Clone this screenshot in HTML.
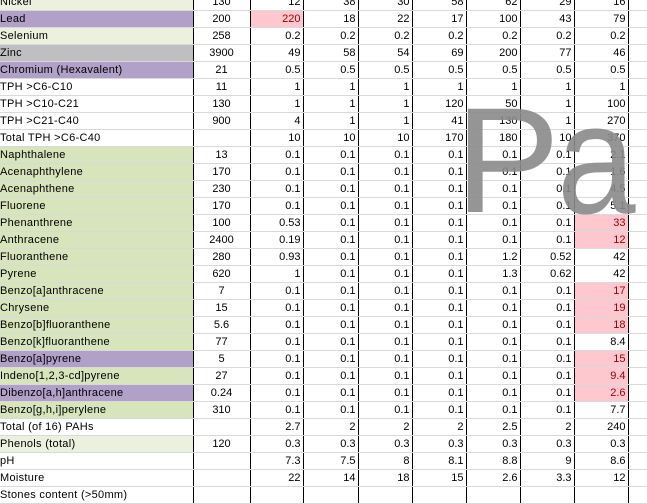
<!DOCTYPE html>
<html><head><style>
body{margin:0;width:647px;height:497px;overflow:hidden;background:#fff;position:relative;font-family:"Liberation Sans",sans-serif;font-size:11px;}
table{position:absolute;left:0;top:-6px;border-collapse:collapse;table-layout:fixed;width:700px;}
td{height:16px;padding:0 2px;border-bottom:1px solid #d9d9d9;white-space:nowrap;overflow:hidden;text-align:right;line-height:16px;color:#000;}
td.l{text-align:left;padding-left:0;letter-spacing:0.3px}
td.c{text-align:center}
td.b{border-left:1px solid #000}
.g1{background:#ebf1de}.pu{background:#b1a0c7}.gr{background:#bfbfbf}.g2{background:#d8e4bc}
.pk{background:#ffc7ce;color:#9c0006}
svg{position:absolute;left:0;top:0;pointer-events:none}
</style></head><body>
<table>
<colgroup><col style="width:193px"><col style="width:57px"><col style="width:53px"><col style="width:55px"><col style="width:54px"><col style="width:54px"><col style="width:54px"><col style="width:54px"><col style="width:54px"><col style="width:72px"></colgroup>
<tbody id="t"></tbody>
</table>
<svg width="647" height="497">
<g fill="#8a8a8a" fill-opacity="0.9" font-family="Liberation Sans, sans-serif">
<text transform="translate(455,212) scale(1.05,1)" font-size="150">P</text>
<text transform="translate(557,213) scale(0.9,1)" font-size="157">a</text>
</g>
</svg>
<script>
var R=[
["Nickel","g1","130","12","38","30","58","62","29","16"],
["Lead","pu","200","!220","18","22","17","100","43","79"],
["Selenium","g1","258","0.2","0.2","0.2","0.2","0.2","0.2","0.2"],
["Zinc","gr","3900","49","58","54","69","200","77","46"],
["Chromium (Hexavalent)","pu","21","0.5","0.5","0.5","0.5","0.5","0.5","0.5"],
["TPH >C6-C10","","11","1","1","1","1","1","1","1"],
["TPH >C10-C21","","130","1","1","1","120","50","1","100"],
["TPH >C21-C40","","900","4","1","1","41","130","1","270"],
["Total TPH >C6-C40","","","10","10","10","170","180","10","370"],
["Naphthalene","g2","13","0.1","0.1","0.1","0.1","0.1","0.1","2.1"],
["Acenaphthylene","g2","170","0.1","0.1","0.1","0.1","0.1","0.1","1.6"],
["Acenaphthene","g2","230","0.1","0.1","0.1","0.1","0.1","0.1","4.5"],
["Fluorene","g2","170","0.1","0.1","0.1","0.1","0.1","0.1","5.1"],
["Phenanthrene","g2","100","0.53","0.1","0.1","0.1","0.1","0.1","!33"],
["Anthracene","g2","2400","0.19","0.1","0.1","0.1","0.1","0.1","!12"],
["Fluoranthene","g2","280","0.93","0.1","0.1","0.1","1.2","0.52","42"],
["Pyrene","g2","620","1","0.1","0.1","0.1","1.3","0.62","42"],
["Benzo[a]anthracene","g2","7","0.1","0.1","0.1","0.1","0.1","0.1","!17"],
["Chrysene","g2","15","0.1","0.1","0.1","0.1","0.1","0.1","!19"],
["Benzo[b]fluoranthene","g2","5.6","0.1","0.1","0.1","0.1","0.1","0.1","!18"],
["Benzo[k]fluoranthene","g2","77","0.1","0.1","0.1","0.1","0.1","0.1","8.4"],
["Benzo[a]pyrene","pu","5","0.1","0.1","0.1","0.1","0.1","0.1","!15"],
["Indeno[1,2,3-cd]pyrene","g2","27","0.1","0.1","0.1","0.1","0.1","0.1","!9.4"],
["Dibenzo[a,h]anthracene","pu","0.24","0.1","0.1","0.1","0.1","0.1","0.1","!2.6"],
["Benzo[g,h,i]perylene","g2","310","0.1","0.1","0.1","0.1","0.1","0.1","7.7"],
["Total (of 16) PAHs","","","2.7","2","2","2","2.5","2","240"],
["Phenols (total)","g1","120","0.3","0.3","0.3","0.3","0.3","0.3","0.3"],
["pH","","","7.3","7.5","8","8.1","8.8","9","8.6"],
["Moisture","","","22","14","18","15","2.6","3.3","12"],
["Stones content (>50mm)","","","","","","","","",""]];
var h="";
R.forEach(function(r){
 h+='<tr><td class="l '+r[1]+'">'+r[0].replace(/>/g,"&gt;")+'</td><td class="c b">'+r[2]+'</td>';
 for(var i=3;i<10;i++){var v=r[i],c="b";if(v.charAt(0)=="!"){v=v.slice(1);c+=" pk";}h+='<td class="'+c+'">'+v+'</td>';}
 h+='<td class="b"></td></tr>';
});
document.getElementById("t").innerHTML=h;
</script>
</body></html>
